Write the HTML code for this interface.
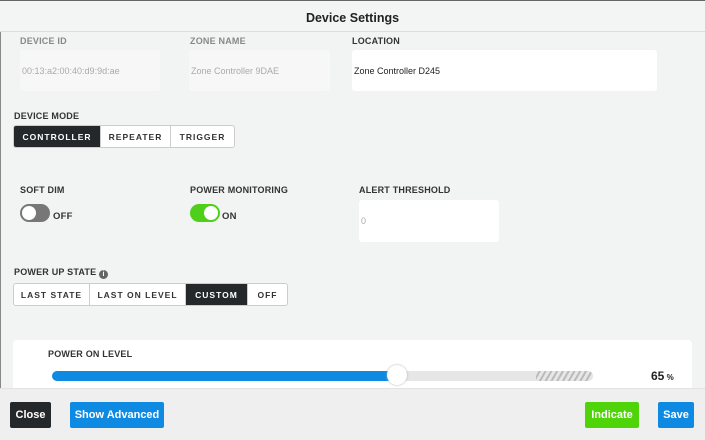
<!DOCTYPE html>
<html><head><style>
*{box-sizing:border-box;margin:0;padding:0}
body{width:705px;height:440px;overflow:hidden;background:#f2f3f3;font-family:"Liberation Sans",sans-serif;position:relative;color:#222}
.a{position:absolute}
.hdr{left:0;top:0;width:705px;height:32px;border-top:1px solid #666;border-bottom:1px solid #dcdcdc;background:#f3f4f4;text-align:center;font-weight:bold;font-size:12.5px;line-height:34px}
.lbl{font-size:9px;font-weight:bold;color:#333;letter-spacing:.2px}
.lbl.g{color:#888}
.inp{background:#f7f7f7;border-radius:3px;font-size:9px;color:#aaa;padding-left:2px;display:flex;align-items:center}
.inp.w{background:#fff;color:#222}
.seg{display:flex;border:1px solid #ccc;border-radius:3px;overflow:hidden;background:#fff}
.seg div{font-size:8.5px;font-weight:bold;letter-spacing:1px;display:flex;align-items:center;justify-content:center;border-right:1px solid #ccc;color:#333}
.seg div:last-child{border-right:0}
.seg .on{background:#25282b;color:#fff}
.tg{width:30px;height:18px;border-radius:9px}
.tg i{position:absolute;top:2px;width:14px;height:14px;border-radius:50%;background:#fff}
.btn{color:#fff;font-size:11px;font-weight:bold;border-radius:2px;display:flex;align-items:center;justify-content:center;height:26px;top:402px}
</style></head><body>
<div class="a" style="left:0;top:0;width:1px;height:440px;background:#888"></div>
<div class="a hdr">Device Settings</div>
<div class="a lbl g" style="left:20px;top:36px">DEVICE ID</div>
<div class="a lbl g" style="left:190px;top:36px">ZONE NAME</div>
<div class="a lbl" style="left:352px;top:36px">LOCATION</div>
<div class="a inp" style="left:20px;top:50px;width:140px;height:41px">00:13:a2:00:40:d9:9d:ae</div>
<div class="a inp" style="left:189px;top:50px;width:141px;height:41px">Zone Controller 9DAE</div>
<div class="a inp w" style="left:352px;top:50px;width:305px;height:41px">Zone Controller D245</div>
<div class="a lbl" style="left:14px;top:111px">DEVICE MODE</div>
<div class="a seg" style="left:13px;top:125px;height:23px;width:222px">
<div class="on" style="width:87px">CONTROLLER</div><div style="width:70px">REPEATER</div><div style="flex:1">TRIGGER</div></div>
<div class="a lbl" style="left:20px;top:185px">SOFT DIM</div>
<div class="a lbl" style="left:190px;top:185px">POWER MONITORING</div>
<div class="a lbl" style="left:359px;top:185px">ALERT THRESHOLD</div>
<div class="a tg" style="left:20px;top:204px;background:#777"><i style="left:2px"></i></div>
<div class="a lbl" style="left:53px;top:211px;font-size:9.5px">OFF</div>
<div class="a tg" style="left:190px;top:204px;background:#4fcf1a"><i style="left:14px"></i></div>
<div class="a lbl" style="left:222px;top:211px;font-size:9.5px">ON</div>
<div class="a inp w" style="left:359px;top:200px;width:140px;height:42px;color:#aaa">0</div>
<div class="a lbl" style="left:14px;top:267px">POWER UP STATE <span style="display:inline-block;width:9px;height:9px;border-radius:50%;background:#666;color:#fff;font-size:7px;text-align:center;line-height:9px;vertical-align:-1px">i</span></div>
<div class="a seg" style="left:13px;top:283px;height:23px;width:275px">
<div style="width:76px">LAST STATE</div><div style="width:96px">LAST ON LEVEL</div><div class="on" style="width:62px">CUSTOM</div><div style="flex:1">OFF</div></div>
<div class="a" style="left:13px;top:340px;width:679px;height:60px;background:#fff;border-radius:4px"></div>
<div class="a lbl" style="left:48px;top:349px">POWER ON LEVEL</div>
<div class="a" style="left:52px;top:371px;width:541px;height:10px;border-radius:5px;background:#e6e6e6;overflow:hidden">
<div style="position:absolute;left:0;top:0;width:345px;height:10px;background:#0f8ae3"></div>
<div style="position:absolute;right:0;top:0;width:57px;height:10px;background:repeating-linear-gradient(-60deg,#bbb 0 2px,#e6e6e6 2px 5px)"></div></div>
<div class="a" style="left:387px;top:365px;width:20px;height:20px;border-radius:50%;background:#fff;box-shadow:0 0 2px #aaa"></div>
<div class="a" style="left:651px;top:369px;font-size:12px;font-weight:bold">65<span style="font-size:8px"> %</span></div>
<div class="a" style="left:0;top:388px;width:705px;height:52px;background:#efefef;border-top:1px solid #e2e2e2"></div>
<div class="a btn" style="left:10px;width:41px;background:#25282b">Close</div>
<div class="a btn" style="left:70px;width:94px;background:#0f8ae3">Show Advanced</div>
<div class="a btn" style="left:585px;width:54px;background:#4fd40a">Indicate</div>
<div class="a btn" style="left:658px;width:36px;background:#0f8ae3">Save</div>
</body></html>
